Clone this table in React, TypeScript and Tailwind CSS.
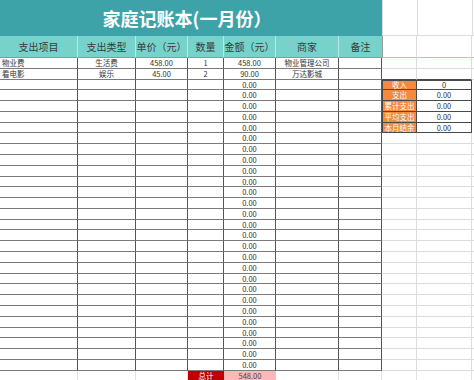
import React from "react";

const cols = [
  { w: "w-[78px]", align: "justify-start pl-[2px]" },
  { w: "w-[58px]", align: "justify-center" },
  { w: "w-[52px]", align: "justify-center" },
  { w: "w-[36px]", align: "justify-center" },
  { w: "w-[52px]", align: "justify-center" },
  { w: "w-[63px]", align: "justify-center" },
  { w: "w-[43px]", align: "justify-center" },
];

const headers = ["支出项目", "支出类型", "单价（元）", "数量", "金额（元）", "商家", "备注"];

const data: string[][] = [
  ["物业费", "生活费", "458.00", "1", "458.00", "物业管理公司", ""],
  ["看电影", "娱乐", "45.00", "2", "90.00", "万达影城", ""],
];

const summary: [string, string][] = [
  ["收入", "0"],
  ["支出", "0.00"],
  ["累计支出", "0.00"],
  ["平均支出", "0.00"],
  ["本月结余", "0.00"],
];

const font = { fontFamily: '"Noto Sans CJK SC", "Noto Sans", sans-serif' };

function RightCells({ idx }: { idx: number }) {
  const s = idx >= 2 && idx <= 6 ? summary[idx - 2] : null;
  if (s) {
    return (
      <>
        <div
          className={`w-[35px] flex items-center justify-center bg-[#f38a3e] text-white text-[7.5px] leading-none border-l border-r border-b border-[#4a4a4a] ${idx === 2 ? "border-t" : ""}`}
        >
          {s[0]}
        </div>
        <div
          className={`w-[55px] flex items-center justify-center text-[#333] text-[7.5px] leading-none border-r border-b border-[#4a4a4a] ${idx === 2 ? "border-t" : ""}`}
        >
          {s[1]}
        </div>
        <div className="w-[2px]" />
      </>
    );
  }
  const below = idx === 1 || idx === 6;
  return (
    <>
      <div className={`w-[35px] border-r border-b ${below ? "border-r-[#dcdcdc] border-b-[#4a4a4a]" : "border-[#dcdcdc]"}`} />
      <div className={`w-[55px] border-r border-b ${below ? "border-r-[#dcdcdc] border-b-[#4a4a4a]" : "border-[#dcdcdc]"}`} />
      <div className="w-[2px] border-b border-[#dcdcdc]" />
    </>
  );
}

export default function App() {
  const rowCount = 29;
  const tops = Array.from({ length: rowCount + 2 }, (_, i) => Math.round(58 + i * 10.78));
  const heights = tops.slice(1).map((t, i) => t - tops[i]);

  return (
    <div className="w-[474px] h-[380px] overflow-hidden bg-white flex flex-col" style={font}>
      {/* Title row */}
      <div className="flex h-[36px] shrink-0">
        <div className="w-[382px] bg-[#3ea3a8] flex items-center justify-center text-white font-bold text-[18px] pr-[8px]">
          家庭记账本(一月份）
        </div>
        <div className="w-[36px] border-l border-r border-b border-[#dcdcdc]" />
        <div className="w-[55px] border-r border-b border-[#dcdcdc]" />
        <div className="w-[1px] border-b border-[#dcdcdc]" />
      </div>
      {/* Header row */}
      <div className="flex h-[22px] shrink-0">
        {headers.map((h, i) => (
          <div
            key={i}
            className={`${cols[i].w} bg-[#78d2cc] flex items-center justify-center text-[10px] text-[#3a3a3a] border-b border-b-[#8a9a99] ${i < 6 ? "border-r border-r-[#b9e8e4]" : ""}`}
          >
            {h}
          </div>
        ))}
        <div className="w-[35px] border-r border-[#dcdcdc] border-b border-b-[#9fd59f] border-l border-l-[#9a9a9a]" />
        <div className="w-[55px] border-r border-[#dcdcdc] border-b border-b-[#9fd59f]" />
        <div className="w-[2px] border-b border-b-[#9fd59f]" />
      </div>
      {/* Data rows */}
      {Array.from({ length: rowCount }, (_, r) => {
        const row = data[r] ?? ["", "", "", "", "0.00", "", ""];
        const h = heights[r];
        return (
          <div key={r} className={`flex shrink-0 ${h === 11 ? "h-[11px]" : "h-[10px]"}`}>
            {row.map((c, i) => (
              <div
                key={i}
                className={`${cols[i].w} ${cols[i].align} flex items-center text-[7.5px] leading-none text-[#333] border-b border-b-[#7a7a7a] border-r border-r-[#555]`}
              >
                {c}
              </div>
            ))}
            <RightCells idx={r} />
          </div>
        );
      })}
      {/* Total row */}
      <div className="flex h-[9px] shrink-0">
        <div className="w-[78px] border-r border-[#e2e2e2]" />
        <div className="w-[58px] border-r border-[#e2e2e2]" />
        <div className="w-[52px] border-r border-[#e2e2e2]" />
        <div className="w-[36px] bg-[#c00000] text-white text-[7.5px] leading-none flex items-center justify-center">
          总计
        </div>
        <div className="w-[52px] bg-[#ffb8b8] text-[#444] text-[7.5px] leading-none flex items-center justify-center">
          548.00
        </div>
        <div className="w-[63px] border-r border-[#e2e2e2]" />
        <div className="w-[43px] border-r border-[#e2e2e2]" />
        <div className="w-[35px] border-r border-[#e2e2e2]" />
        <div className="w-[55px] border-r border-[#e2e2e2]" />
        <div className="w-[2px]" />
      </div>
    </div>
  );
}
